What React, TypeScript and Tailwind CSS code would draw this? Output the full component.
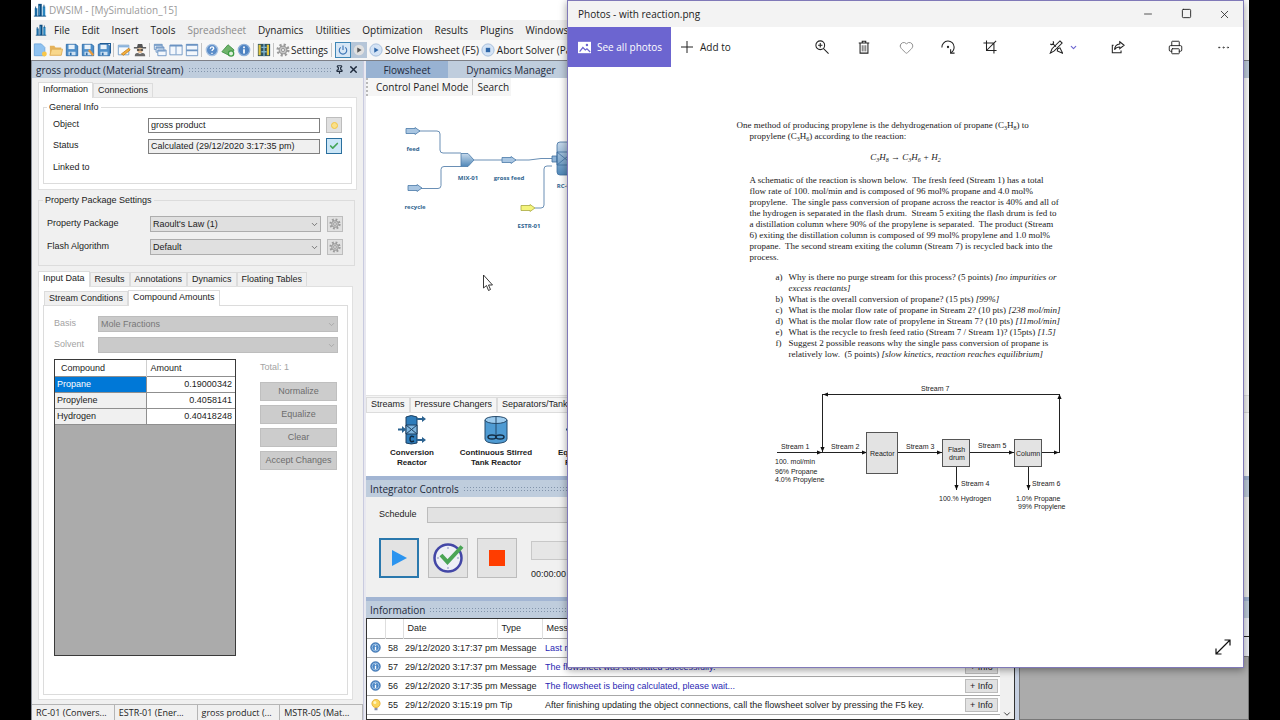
import { Fragment, useState } from 'react'
import type { ReactNode } from 'react'

import clsx from 'clsx'
import { Check, ChevronDown, Ellipsis, Heart, Minus, Pin, Printer, Square, X } from 'lucide-react'

const menuItems = [
  'File',
  'Edit',
  'Insert',
  'Tools',
  'Spreadsheet',
  'Dynamics',
  'Utilities',
  'Optimization',
  'Results',
  'Plugins',
  'Windows',
]

const compounds = [
  { name: 'Propane', amount: '0.19000342' },
  { name: 'Propylene', amount: '0.4058141' },
  { name: 'Hydrogen', amount: '0.40418248' },
]

const messages = [
  { id: 58, date: '29/12/2020 3:17:37 pm', type: 'Message', text: 'Last run took 0.4 s.' },
  { id: 57, date: '29/12/2020 3:17:37 pm', type: 'Message', text: 'The flowsheet was calculated successfully.' },
  { id: 56, date: '29/12/2020 3:17:35 pm', type: 'Message', text: 'The flowsheet is being calculated, please wait...' },
  {
    id: 55,
    date: '29/12/2020 3:15:19 pm',
    type: 'Tip',
    text: 'After finishing updating the object connections, call the flowsheet solver by pressing the F5 key.',
  },
]

const openEditors = ['RC-01 (Convers...', 'ESTR-01 (Ener...', 'gross product (...', 'MSTR-05 (Mat...']

/* ---------- icons ---------- */

function Icon({ children, size = 14 }: { children: ReactNode; size?: number }) {
  return (
    <svg width={size} height={size} viewBox="0 0 16 16" fill="none" aria-hidden="true">
      {children}
    </svg>
  )
}

function AppLogo({ size = 14 }: { size?: number }) {
  return (
    <Icon size={size}>
      <path d="M2 6h3v9H2z" fill="#1c6ca4" />
      <path d="M6 1h4v14H6z" fill="#0d4d80" />
      <path d="M11 4h3v11h-3z" fill="#2a86c0" />
      <path d="M3 4v3M12.500 2v3M7 4h2M1 15h14" stroke="#0d4d80" />
      <path d="M7.200 3v11" stroke="#4da3d8" />
    </Icon>
  )
}

function Floppy({ extra }: { extra?: ReactNode }) {
  return (
    <Icon>
      <path d="M1.500 1.500h11l2 2v11h-13z" fill="#4f8fc9" stroke="#2d6ca8" />
      <path d="M4 2h7v5H4z" fill="#e9f2fa" />
      <path d="M4 10h8v4H4z" fill="#cfe1f1" />
      <path d="M5.500 11h2v3h-2z" fill="#2d6ca8" />
      {extra}
    </Icon>
  )
}

function Gear({ size = 14 }: { size?: number }) {
  return (
    <Icon size={size}>
      <circle cx="8" cy="8" r="6" stroke="#9a9a9a" strokeWidth="3" strokeDasharray="2.400 2.310" />
      <circle cx="8" cy="8" r="4.500" fill="#c6c6c6" stroke="#8f8f8f" />
      <circle cx="8" cy="8" r="1.800" fill="#f0f0f0" stroke="#8f8f8f" />
    </Icon>
  )
}

function RoundBadge({ children }: { children: ReactNode }) {
  return (
    <Icon>
      <circle cx="8" cy="8" r="7" fill="#d4e3f5" stroke="#9fb9d8" />
      {children}
    </Icon>
  )
}

function InfoIcon() {
  return (
    <Icon size={11}>
      <circle cx="8" cy="8" r="7" fill="#4a86c5" stroke="#2f65a4" />
      <circle cx="8" cy="8" r="5" stroke="#b9d3ee" />
      <path d="M8 4v1.500M8 7v5" stroke="#fff" strokeWidth="2" />
    </Icon>
  )
}

function BulbIcon() {
  return (
    <Icon size={12}>
      <circle cx="8" cy="6" r="5.500" fill="#fbd55b" stroke="#e0a52e" />
      <circle cx="6.500" cy="4.500" r="2" fill="#fff4c0" />
      <path d="M6 12h4v3H6z" fill="#8b8fa8" />
    </Icon>
  )
}

const toolbarIcons: { label: string; icon: ReactNode }[][] = [
  [
    {
      label: 'New',
      icon: (
        <Icon>
          <path d="M1.500 1h8l4 4v9.500h-12z" fill="#8fc2f0" stroke="#6ba6dc" />
          <circle cx="13" cy="12.500" r="2.800" fill="#f9c74a" />
        </Icon>
      ),
    },
    {
      label: 'Open',
      icon: (
        <Icon>
          <path d="M1 3h5l1.500 2H14v9H1z" fill="#e5b35c" />
          <path d="M1 14l2-7h12.500L14 14z" fill="#f8d78b" stroke="#dfae57" />
        </Icon>
      ),
    },
    { label: 'Save', icon: <Floppy /> },
    { label: 'Save as', icon: <Floppy extra={<path d="M9 8l5 6" stroke="#ea9a3a" strokeWidth="2.500" />} /> },
    { label: 'Save all', icon: <Floppy extra={<path d="M3 .5h12.500V12" stroke="#1f5c96" strokeWidth="1.500" />} /> },
  ],
  [
    {
      label: 'Notes',
      icon: (
        <Icon>
          <path d="M1.500 2.500h12v11h-12z" fill="#f7fafd" stroke="#6e9ac6" />
          <path d="M2 3h11v2H2z" fill="#8ab4de" />
          <path d="M5 12.500l8.500-6.500 1.500 2-7.500 6z" fill="#f4b03e" stroke="#c7821e" />
        </Icon>
      ),
    },
    {
      label: 'Inspector',
      icon: (
        <Icon>
          <path d="M4.500 5l1-4h5l1 4z" fill="#555" />
          <path d="M1 5.500h14" stroke="#444" strokeWidth="1.500" />
          <circle cx="8" cy="8.500" r="3" fill="#e4bd93" />
          <path d="M2 15c0-4 3-4.500 6-2.500 3-2 6-1.500 6 2.500z" fill="#6a6a6a" />
          <path d="M4.500 8h3M8.500 8h3" stroke="#333" strokeWidth="1.500" />
        </Icon>
      ),
    },
  ],
  [
    {
      label: 'Cascade',
      icon: (
        <Icon>
          <path d="M1.500 1.500h9v6h-9z" fill="#e3ecf7" stroke="#6b93c2" />
          <path d="M3.500 4.500h9v6h-9z" fill="#e3ecf7" stroke="#6b93c2" />
          <path d="M5.500 8h9.500v6.500H5.500z" fill="#f3f7fc" stroke="#6b93c2" />
          <path d="M5.500 9h9M3.500 5.500h9M1.500 2.500h9" stroke="#6b93c2" strokeWidth="1.500" />
        </Icon>
      ),
    },
    {
      label: 'Tile vertically',
      icon: (
        <Icon>
          <path d="M1 2.500h14v11H1zM8 3v10" fill="#f3f7fc" stroke="#6b93c2" />
          <path d="M1 3h14" stroke="#6b93c2" strokeWidth="2" />
        </Icon>
      ),
    },
    {
      label: 'Tile horizontally',
      icon: (
        <Icon>
          <path d="M1.500 1.500h13v13h-13z" fill="#f3f7fc" stroke="#6b93c2" />
          <path d="M1.500 2h13M1.500 8.500h13" stroke="#6b93c2" strokeWidth="2" />
        </Icon>
      ),
    },
  ],
  [
    {
      label: 'Help',
      icon: (
        <Icon>
          <circle cx="8" cy="8" r="6.500" fill="#5b8dc9" stroke="#a9c3e2" strokeWidth="1.500" />
          <path d="M6 6.500c0-3 4-2.500 4-.5 0 1.500-2 1.500-2 3M8 11v1.500" stroke="#fff" strokeWidth="1.500" />
        </Icon>
      ),
    },
    {
      label: 'Donate',
      icon: (
        <Icon>
          <path d="M1 10L8 2l7 6-6 6z" fill="#6fb36b" stroke="#3f8f45" />
          <circle cx="11.500" cy="12" r="3" fill="#dff0dd" stroke="#3f9c45" strokeWidth="1.500" />
        </Icon>
      ),
    },
    {
      label: 'About',
      icon: (
        <Icon>
          <circle cx="8" cy="8" r="6.500" fill="#4d82c2" stroke="#8fb0d8" strokeWidth="1.500" />
          <path d="M8 4v2M8 7v5" stroke="#fff" strokeWidth="2" />
        </Icon>
      ),
    },
  ],
  [
    {
      label: 'CAPE-OPEN',
      icon: (
        <Icon>
          <path d="M1 1h14v14H1z" fill="#2f5360" />
          <path d="M3 2v12M12.500 2v12" stroke="#e3c53f" strokeWidth="2.500" />
          <path d="M8 1v14M5 5h6M5 10h6" stroke="#7fb4cf" strokeWidth="1.500" />
        </Icon>
      ),
    },
  ],
]

/* ---------- small shared pieces ---------- */

function Grip() {
  return (
    <span className="h-[5px] flex-1 bg-[radial-gradient(circle,#8294ab_0.6px,transparent_1px)] bg-[size:3px_3px]" />
  )
}

function PanelHeader({ title, children }: { title: string; children?: ReactNode }) {
  return (
    <div className="flex h-[17px] shrink-0 items-center gap-1 bg-[#bfcddd] px-1 font-['Open_Sans',sans-serif] text-[10px] leading-4 text-[#1e2a3c]">
      <h2 className="whitespace-nowrap">{title}</h2>
      <Grip />
      {children}
    </div>
  )
}

function Tab({ active, children }: { active?: boolean; children: ReactNode }) {
  return (
    <button
      type="button"
      role="tab"
      aria-selected={!!active}
      className={clsx(
        'border border-b-0 border-[#dcdcdc] px-1 text-[9px] whitespace-nowrap',
        active ? 'relative -mb-px h-4 bg-white pb-0.5' : 'h-3.5 bg-[#f0f0f0]',
      )}
    >
      {children}
    </button>
  )
}

function SelectBox({ id, value, disabled }: { id: string; value: string; disabled?: boolean }) {
  return (
    <div className="relative">
      <select
        id={id}
        disabled={disabled}
        defaultValue={value}
        className={clsx(
          'block h-4 w-full appearance-none border px-[2px] text-[9px] leading-3 disabled:opacity-100',
          disabled ? 'border-[#bdbdbd] bg-[#cacaca] text-[#777]' : 'border-[#adadad] bg-[#e0e0e0] text-[#1c1c1c]',
        )}
      >
        <option>{value}</option>
      </select>
      <ChevronDown
        size={9}
        strokeWidth={2}
        className={clsx(
          'pointer-events-none absolute top-1 right-[2px]',
          disabled ? 'text-[#a0a0a0]' : 'text-[#555]',
        )}
      />
    </div>
  )
}

function IconButton({ label, on, children }: { label: string; on?: boolean; children: ReactNode }) {
  return (
    <button
      type="button"
      aria-label={label}
      className={clsx(
        'ml-1.5 flex size-4 shrink-0 items-center justify-center border',
        on ? 'border-[#2a6f9e] bg-[#cbe6f7]' : 'border-[#bdbdbd] bg-[#e0e0e0]',
      )}
    >
      {children}
    </button>
  )
}

/* ---------- stream editor ---------- */

function StreamEditor() {
  const [selected, setSelected] = useState('Propane')

  return (
    <section className="flex w-[332px] shrink-0 flex-col border-l border-[#8a8f98] bg-[#f0f0f0]">
      <PanelHeader title="gross product (Material Stream)">
        <button type="button" aria-label="Auto hide">
          <Pin size={9} strokeWidth={3} />
        </button>
        <button type="button" aria-label="Close">
          <X size={11} strokeWidth={3} />
        </button>
      </PanelHeader>

      <div className="flex flex-1 flex-col px-1.5 pt-1">
        <div role="tablist" className="flex items-end">
          <Tab active>Information</Tab>
          <Tab>Connections</Tab>
        </div>
        <div className="border border-[#e0e0e0] bg-white px-1 pt-[3px] pb-[5px]">
          <fieldset className="border border-[#dcdcdc] pt-1 pb-2 pl-[9px]">
            <legend className="-ml-1.5 px-[2px] text-[9px] leading-3">General Info</legend>
            <div className="grid grid-cols-[95px_172px_22px] items-center gap-y-[5px] text-[9px]">
              <label htmlFor="object">Object</label>
              <input
                id="object"
                defaultValue="gross product"
                className="h-[15px] w-full border border-[#7f7f7f] bg-white px-[2px]"
              />
              <IconButton label="Active">
                <span className="size-[7px] rounded-full border border-[#f3c443] bg-[#fae08a]" />
              </IconButton>
              <label htmlFor="status">Status</label>
              <input
                id="status"
                readOnly
                value="Calculated (29/12/2020 3:17:35 pm)"
                className="h-[15px] w-full border border-[#7f7f7f] bg-[#f0f0f0] px-[2px]"
              />
              <IconButton label="Calculated" on>
                <Check size={10} strokeWidth={4} className="text-[#45a557]" />
              </IconButton>
              <span className="h-4 leading-4">Linked to</span>
            </div>
          </fieldset>
        </div>

        <fieldset className="mt-1 mr-[2px] border border-[#dcdcdc] pb-2.5 pl-2">
          <legend className="-ml-1 px-[2px] text-[9px] leading-3">Property Package Settings</legend>
          <div className="grid grid-cols-[103px_171px_22px] items-center gap-y-[7px] pt-2.5 text-[9px]">
            <label htmlFor="package">Property Package</label>
            <SelectBox id="package" value="Raoult's Law (1)" />
            <IconButton label="Configure property package">
              <Gear size={12} />
            </IconButton>
            <label htmlFor="flash">Flash Algorithm</label>
            <SelectBox id="flash" value="Default" />
            <IconButton label="Configure flash algorithm">
              <Gear size={12} />
            </IconButton>
          </div>
        </fieldset>

        <div role="tablist" className="mt-[5px] flex items-end">
          <Tab active>Input Data</Tab>
          <Tab>Results</Tab>
          <Tab>Annotations</Tab>
          <Tab>Dynamics</Tab>
          <Tab>Floating Tables</Tab>
        </div>
        <div className="mr-1 mb-1 flex flex-1 flex-col border border-[#e0e0e0] bg-white px-1 pt-[3px] pb-1">
          <div role="tablist" className="flex items-end pl-px">
            <Tab>Stream Conditions</Tab>
            <Tab active>Compound Amounts</Tab>
          </div>
          <div className="flex flex-1 flex-col border border-[#dcdcdc] px-2.5 pt-2.5">
            <div className="grid grid-cols-[44px_240px] items-center gap-y-[5px] text-[9px] text-[#a3a3a3]">
              <label htmlFor="basis">Basis</label>
              <SelectBox id="basis" value="Mole Fractions" disabled />
              <label htmlFor="solvent">Solvent</label>
              <SelectBox id="solvent" value="" disabled />
            </div>
            <div className="mt-1.5 mb-[38px] flex flex-1 gap-6">
              <div className="w-[184px] border border-[#3a3a3a] bg-[#ababab]">
                <table className="w-full border-collapse text-[9px] leading-3">
                  <thead className="bg-white">
                    <tr className="h-4 border-b border-[#8f8f8f]">
                      <th className="w-[91px] border-r border-[#cfcfcf] pl-1.5 text-left font-normal">Compound</th>
                      <th className="pl-1 text-left font-normal">Amount</th>
                    </tr>
                  </thead>
                  <tbody>
                    {compounds.map((compound) => (
                      <tr
                        key={compound.name}
                        onClick={() => setSelected(compound.name)}
                        className="h-4 border-b border-[#8f8f8f]"
                      >
                        <td
                          className={clsx(
                            'border-r border-[#8f8f8f] pl-[2px]',
                            selected === compound.name ? 'bg-[#0078d7] text-white' : 'bg-[#f0f0f0]',
                          )}
                        >
                          {compound.name}
                        </td>
                        <td className="bg-white pr-[3px] text-right">{compound.amount}</td>
                      </tr>
                    ))}
                  </tbody>
                </table>
              </div>
              <div className="flex w-[78px] flex-col gap-1 text-[9px]">
                <p className="mb-[3px] h-4 leading-4 text-[#a3a3a3]">Total: 1</p>
                {['Normalize', 'Equalize', 'Clear', 'Accept Changes'].map((label) => (
                  <button
                    key={label}
                    type="button"
                    disabled
                    className="h-[19px] border border-[#bfbfbf] bg-[#cccccc] whitespace-nowrap text-[#6d6d6d]"
                  >
                    {label}
                  </button>
                ))}
              </div>
            </div>
          </div>
        </div>
      </div>

      <div
        role="tablist"
        className="grid h-4 shrink-0 grid-cols-4 border-t border-[#b5b5b5] font-['Open_Sans',sans-serif] text-[9px] leading-3"
      >
        {openEditors.map((name) => (
          <button key={name} type="button" role="tab" className="border-r border-[#b5b5b5] px-1 text-left whitespace-nowrap">
            {name}
          </button>
        ))}
      </div>
    </section>
  )
}

/* ---------- flowsheet ---------- */

function StreamArrow({ x, y, energy }: { x: number; y: number; energy?: boolean }) {
  return (
    <path
      transform={`translate(${x} ${y})`}
      d="M0 -2.500h9v-1l5 3.500-5 3.500v-1H0z"
      fill={energy ? '#f4f47c' : '#a9c6e2'}
      stroke={energy ? '#a9a941' : '#4a7aa8'}
      strokeWidth="0.8"
    />
  )
}

function FlowsheetCanvas() {
  return (
    <svg width="212" height="297" viewBox="366 96 212 297" className="block" role="img" aria-label="Flowsheet">
      <defs>
        <linearGradient id="unit" x1="0" y1="0" x2="0" y2="1">
          <stop offset="0" stopColor="#c7daec" />
          <stop offset="1" stopColor="#4f87b8" />
        </linearGradient>
      </defs>
      <g fill="none" stroke="#6a8fb5" strokeWidth="1">
        <path d="M419 131h18q3 0 3 3v16q0 3 3 3h18" />
        <path d="M421 188.500h17q3 0 3-3v-16q0-3 3-3h17" />
        <path d="M474 160h29M515 160h14l12-1.500h12M535 208h6q3 0 3-3v-36q0-3 3-3h5" />
      </g>
      <path d="M461 153.500h7l6 6.500-6 6.500h-7z" fill="url(#unit)" stroke="#4a7aa8" strokeWidth="0.800" />
      <StreamArrow x={406} y={131} />
      <StreamArrow x={408} y={188} />
      <StreamArrow x={502} y={160} />
      <StreamArrow x={521} y={208} energy />
      <path d="M552 156h5v6h-5z" fill="#8fb3d6" stroke="#3f6f9f" strokeWidth="0.800" />
      <rect x="557" y="142" width="16" height="33" rx="3" fill="url(#unit)" stroke="#3f6f9f" strokeWidth="0.800" />
      <path d="M557 152h16v13h-16zM557 152l16 13M573 152l-16 13" fill="none" stroke="#3f6f9f" strokeWidth="0.800" />
      <g className="fill-[#2f648f] font-['Open_Sans',sans-serif] text-[6px] font-bold" textAnchor="middle">
        <text x="413" y="151">feed</text>
        <text x="415" y="209">recycle</text>
        <text x="468" y="180">MIX-01</text>
        <text x="509" y="180">gross feed</text>
        <text x="529" y="228">ESTR-01</text>
        <text x="565" y="188">RC-01</text>
      </g>
      <path d="M483.500 275v13l3-2.500 2 5 2-1-2-4.500h4z" fill="#fff" stroke="#222" strokeWidth="0.900" />
    </svg>
  )
}

function ConversionReactorIcon() {
  return (
    <svg width="30" height="30" viewBox="0 0 30 30" fill="none" aria-hidden="true">
      <path d="M9 2q5-3 11 0v26q-6 2-11 0z" fill="#2f7dbb" stroke="#1c3f60" />
      <path d="M9 10h11v9H9zM9 10l11 9M20 10L9 19" fill="#7fb5de" stroke="#1c3f60" />
      <path d="M1 14.500h7M20 4h7M20 25h7" stroke="#2b6290" strokeWidth="2" />
      <path d="M5 11l4 3.500L5 18zM25 1l4 3-4 3zM25 22l4 3-4 3z" fill="#2b6290" />
      <path d="M17 22q-4-2-4 2t4 2" stroke="#102a42" strokeWidth="1.500" />
    </svg>
  )
}

function StirredTankIcon() {
  return (
    <svg width="26" height="30" viewBox="0 0 26 30" fill="none" aria-hidden="true">
      <path d="M2 5v19q0 4 11 4.500Q24 28 24 24V5" fill="#4f9bd3" stroke="#23496b" />
      <ellipse cx="13" cy="5" rx="11" ry="3.500" fill="#9ccbee" stroke="#23496b" />
      <path d="M13 2v20" stroke="#23496b" />
      <ellipse cx="9" cy="22" rx="4" ry="2" stroke="#152f47" strokeWidth="1.500" />
      <ellipse cx="17" cy="22" rx="4" ry="2" stroke="#152f47" strokeWidth="1.500" />
    </svg>
  )
}

const paletteItems = [
  { lines: ['Conversion', 'Reactor'], icon: <ConversionReactorIcon /> },
  { lines: ['Continuous Stirred', 'Tank Reactor'], icon: <StirredTankIcon /> },
  { lines: ['Equilibrium', 'Reactor'], icon: <ConversionReactorIcon /> },
]

function FlowsheetPanel() {
  return (
    <section className="flex min-h-0 flex-1 flex-col bg-white">
      <div
        role="tablist"
        className="flex h-[17px] shrink-0 bg-[#bfcddd] font-['Open_Sans',sans-serif] text-[10px] leading-3 text-[#1e2a3c]"
      >
        <button type="button" role="tab" aria-selected="true" className="w-[82px] bg-[#98b2d2]">
          Flowsheet
        </button>
        <button type="button" role="tab" aria-selected="false" className="w-[126px]">
          Dynamics Manager
        </button>
      </div>
      <div className="flex h-[18px] w-[145px] shrink-0 items-center border-l-2 border-dotted border-[#b8b8b8] bg-[#f5f5f5] pl-2 font-['Open_Sans',sans-serif] text-[10px] leading-4 whitespace-nowrap">
        <button type="button">Control Panel Mode</button>
        <button type="button" className="ml-1 border-l border-[#c4c4c4] pl-1">
          Search
        </button>
      </div>
      <div className="min-h-0 flex-1 overflow-hidden">
        <FlowsheetCanvas />
      </div>
      <div role="tablist" className="flex h-[17px] shrink-0 items-end border-t border-[#e3e3e3] bg-[#f5f5f5] text-[9px]">
        {['Streams', 'Pressure Changers', 'Separators/Tanks', 'Mixers/Splitters'].map((name) => (
          <button
            key={name}
            type="button"
            role="tab"
            className="h-[15px] border border-b-0 border-[#dcdcdc] px-1 whitespace-nowrap"
          >
            {name}
          </button>
        ))}
      </div>
      <div className="flex h-16 shrink-0 border-t border-[#dcdcdc] pt-[2px] pl-1 text-center text-[8px] leading-[10px] font-bold">
        {paletteItems.map((item) => (
          <div key={item.lines[0]} className="flex w-[84px] flex-col items-center whitespace-nowrap">
            <div className="mb-[3px]">{item.icon}</div>
            {item.lines.map((line) => (
              <span key={line}>{line}</span>
            ))}
          </div>
        ))}
      </div>
    </section>
  )
}

/* ---------- docked panels ---------- */

function IntegratorControls() {
  return (
    <section className="flex shrink-0 flex-col border-t-4 border-[#a2b5d3] bg-[#f0f0f0]">
      <PanelHeader title="Integrator Controls">
        <X size={11} strokeWidth={3} />
      </PanelHeader>
      <div className="h-[100px] px-[13px] pt-2.5">
        <div className="flex items-center">
          <label htmlFor="schedule" className="w-12 text-[9px]">
            Schedule
          </label>
          <select id="schedule" className="h-4 w-64 appearance-none border border-[#bcbcbc] bg-[#e2e2e2]" />
        </div>
        <div className="mt-[15px] flex gap-[9px]">
          <button
            type="button"
            aria-label="Run"
            className="flex size-10 items-center justify-center border-2 border-[#2a78ad] bg-[#e3e3e3]"
          >
            <svg width="16" height="16" viewBox="0 0 16 16" aria-hidden="true">
              <path d="M1 0l15 8L1 16z" fill="#2b94ef" />
            </svg>
          </button>
          <button
            type="button"
            aria-label="Real-time"
            className="flex size-10 items-center justify-center border border-[#bcbcbc] bg-[#e3e3e3]"
          >
            <svg width="32" height="32" viewBox="0 0 32 32" fill="none" aria-hidden="true">
              <circle cx="16" cy="16" r="13.500" fill="#eef0f6" stroke="#4347a6" strokeWidth="2.500" />
              <path d="M16 5v2M16 25v2M5 16h2M25 16h2" stroke="#8a8fc0" />
              <path d="M9 13l6.500 7L30 4.500" stroke="#4aa556" strokeWidth="4" />
            </svg>
          </button>
          <button
            type="button"
            aria-label="Stop"
            className="flex size-10 items-center justify-center border border-[#bcbcbc] bg-[#e3e3e3]"
          >
            <span className="size-4 bg-[#ff3d00]" />
          </button>
          <div className="ml-[5px] pt-[3px]">
            <div className="h-[19px] w-40 border border-[#c8c8c8] bg-[#e6e6e6]" />
            <p className="mt-2 text-[9px]">00:00:00</p>
          </div>
        </div>
      </div>
    </section>
  )
}

function InformationPanel() {
  return (
    <section className="flex w-[649px] shrink-0 flex-col">
      <PanelHeader title="Information">
        <X size={11} strokeWidth={3} />
      </PanelHeader>
      <div className="flex min-h-0 flex-1 items-start overflow-hidden border border-[#333] bg-white">
        <table className="w-full table-fixed border-collapse text-[9px] leading-3">
          <thead>
            <tr className="h-[19px] border-b border-[#a8a8a8] text-left">
              <th className="w-[18px] border-r border-[#dedede]" />
              <th className="w-[18px] border-r border-[#dedede]" />
              <th className="w-[94px] border-r border-[#dedede] pl-1 font-normal">Date</th>
              <th className="w-[45px] border-r border-[#dedede] pl-1 font-normal">Type</th>
              <th className="pl-1 font-normal">Message</th>
              <th className="w-[37px]" />
            </tr>
          </thead>
          <tbody>
            {messages.map((m) => (
              <tr key={m.id} className="h-[19px] border-b border-[#a8a8a8] whitespace-nowrap">
                <td className="pl-[3px]">{m.type === 'Tip' ? <BulbIcon /> : <InfoIcon />}</td>
                <td className="pl-[3px]">{m.id}</td>
                <td className="pl-[2px]">{m.date}</td>
                <td className="pl-[3px]">{m.type}</td>
                <td className={clsx('pl-[3px]', m.type === 'Message' && 'text-[#2a1fb4]')}>{m.text}</td>
                <td className="px-[2px]">
                  <button type="button" className="block h-3.5 w-full border border-[#bcbcbc] bg-[#e2e2e2]">
                    + Info
                  </button>
                </td>
              </tr>
            ))}
          </tbody>
        </table>
        <div className="flex w-3.5 shrink-0 flex-col items-center justify-end self-stretch bg-[#f0f0f0]">
          <ChevronDown size={10} strokeWidth={2} />
        </div>
      </div>
    </section>
  )
}

function WatchPanel() {
  return (
    <section className="ml-1 flex flex-1 flex-col">
      <PanelHeader title="Watch">
        <Pin size={9} strokeWidth={3} />
      </PanelHeader>
      <div className="h-[19px] border-b border-[#222] bg-[#eef0f8]" />
      <div className="h-[19px] bg-[#eef0f8]" />
      <div className="flex-1 border border-[#777] bg-[#ababab]" />
    </section>
  )
}

/* ---------- photos window ---------- */

function ZoomIcon() {
  return (
    <Icon>
      <circle cx="6" cy="6" r="5" stroke="currentColor" strokeWidth="1.200" />
      <path d="M9.500 9.500L15.500 15.500M3.500 6h5M6 3.500v5" stroke="currentColor" strokeWidth="1.200" />
    </Icon>
  )
}

function BinIcon() {
  return (
    <Icon>
      <path d="M2 3.500h12M6 3V1.500h4V3M3.500 4v11h9V4" stroke="currentColor" strokeWidth="1.200" />
      <path d="M6 6v7M8 6v7M10 6v7" stroke="currentColor" strokeWidth="0.800" />
    </Icon>
  )
}

function RotateIcon() {
  return (
    <Icon>
      <path d="M1 8.500a7 7 0 0 1 14-.5c0 3-1.500 5.500-4 6.500" stroke="currentColor" strokeWidth="1.200" />
      <path d="M11 10.500v4.500h4.500" stroke="currentColor" strokeWidth="1.200" />
      <circle cx="8" cy="8" r="1.300" fill="currentColor" />
    </Icon>
  )
}

function CropIcon() {
  return (
    <Icon>
      <path d="M4 .5V12h11.500M.5 3.500H12.500V15.500M4 12L15 1" stroke="currentColor" strokeWidth="1.200" />
    </Icon>
  )
}

function EditCreateIcon() {
  return (
    <Icon>
      <path d="M12.500 1l2.500 2.500L6 12.500 1.500 15 3.500 10z" stroke="currentColor" strokeWidth="1.200" />
      <path d="M4.500 1.500a2 2 0 1 1-3 3M4.500 4.500l3.500 3M10 10l2.500-1 3 6-6-2.500z" stroke="currentColor" strokeWidth="1.200" />
    </Icon>
  )
}

function ShareIcon() {
  return (
    <Icon>
      <path d="M3 6H1.500v8.500h10V12" stroke="currentColor" strokeWidth="1.200" />
      <path d="M10 2l5 4-5 4V8q-4 0-6 3 .5-6 6-6.500z" stroke="currentColor" strokeWidth="1.200" />
    </Icon>
  )
}

function PhotosBarButton({ label, className, children }: { label: string; className: string; children: ReactNode }) {
  return (
    <button type="button" aria-label={label} className={clsx('flex h-full items-center justify-center', className)}>
      {children}
    </button>
  )
}

const paragraph = [
  'A schematic of the reaction is shown below.  The fresh feed (Stream 1) has a total',
  'flow rate of 100. mol/min and is composed of 96 mol% propane and 4.0 mol%',
  'propylene.  The single pass conversion of propane across the reactor is 40% and all of',
  'the hydrogen is separated in the flash drum.  Stream 5 exiting the flash drum is fed to',
  'a distillation column where 90% of the propylene is separated.  The product (Stream',
  '6) exiting the distillation column is composed of 99 mol% propylene and 1.0 mol%',
  'propane.  The second stream exiting the column (Stream 7) is recycled back into the',
  'process.',
]

// each line is a question part followed by its answer part
const questions = [
  {
    key: 'a',
    lines: [
      ['Why is there no purge stream for this process? (5 points) ', '[no impurities or'],
      ['', 'excess reactants]'],
    ],
  },
  { key: 'b', lines: [['What is the overall conversion of propane? (15 pts) ', '[99%]']] },
  { key: 'c', lines: [['What is the molar flow rate of propane in Stream 2? (10 pts) ', '[238 mol/min]']] },
  { key: 'd', lines: [['What is the molar flow rate of propylene in Stream 7? (10 pts) ', '[11mol/min]']] },
  { key: 'e', lines: [['What is the recycle to fresh feed ratio (Stream 7 / Stream 1)? (15pts) ', '[1.5]']] },
  {
    key: 'f',
    lines: [
      ['Suggest 2 possible reasons why the single pass conversion of propane is', ''],
      ['relatively low.  (5 points) ', '[slow kinetics, reaction reaches equilibrium]'],
    ],
  },
]

function Formula({ c, h }: { c?: number; h: number }) {
  return (
    <>
      {c && (
        <>
          C<sub className="text-[6px]">{c}</sub>
        </>
      )}
      H<sub className="text-[6px]">{h}</sub>
    </>
  )
}

const streamPaths = [
  'M777 452.500H822',
  'M822 452.500H867',
  'M898 452.500H942',
  'M970 452.500H1014',
  'M1042 452.500H1059',
  'M1059.500 453V394',
  'M1059 394.500H823',
  'M822.500 394V452',
  'M956.500 467V490',
  'M1028.500 467V490',
]

function ProcessSchematic() {
  return (
    <svg width="300" height="135" viewBox="770 380 300 135" className="block" role="img" aria-label="Process schematic">
      <defs>
        <marker id="arrow" viewBox="0 0 6 6" refX="6" refY="3" markerWidth="5" markerHeight="5" orient="auto">
          <path d="M0 0.500L6 3 0 5.500z" fill="#111" />
        </marker>
      </defs>
      {streamPaths.map((d) => (
        <path key={d} d={d} fill="none" stroke="#222" strokeWidth="1" markerEnd="url(#arrow)" />
      ))}
      <g fill="#e3e3e3" stroke="#555" strokeWidth="1">
        <rect x="866.500" y="432.500" width="31" height="41" />
        <rect x="942.500" y="439.500" width="27" height="27" />
        <rect x="1014.500" y="439.500" width="27" height="27" />
      </g>
      <g className="fill-[#222] font-['Liberation_Sans',Arial,sans-serif] text-[7px]">
        <text x="921" y="391">Stream 7</text>
        <text x="781" y="449">Stream 1</text>
        <text x="831" y="449">Stream 2</text>
        <text x="906" y="449">Stream 3</text>
        <text x="978" y="448">Stream 5</text>
        <text x="961" y="486">Stream 4</text>
        <text x="1032" y="486">Stream 6</text>
        <text x="870" y="456">Reactor</text>
        <text x="948" y="452">Flash</text>
        <text x="949" y="460">drum</text>
        <text x="1016" y="456">Column</text>
        <text x="775" y="464">100. mol/min</text>
        <text x="775" y="474">96% Propane</text>
        <text x="775" y="482">4.0% Propylene</text>
        <text x="939" y="501">100.% Hydrogen</text>
        <text x="1016" y="501">1.0% Propane</text>
        <text x="1018" y="509">99% Propylene</text>
      </g>
    </svg>
  )
}

function ProblemSheet() {
  return (
    <article className="mx-auto w-[338px] pt-[53px] font-['Liberation_Serif','Times_New_Roman',serif] text-[9px] leading-[11px] whitespace-pre text-[#1a1a1a]">
      <p className="pl-[13px] -indent-[13px]">
        One method of producing propylene is the dehydrogenation of propane (<Formula c={3} h={8} />) to{'\n'}
        propylene (<Formula c={3} h={6} />) according to the reaction:
      </p>
      <p className="mt-2.5 text-center italic">
        <Formula c={3} h={8} /> → <Formula c={3} h={6} /> + <Formula h={2} />
      </p>
      <p className="mt-3 pl-[13px]">{paragraph.join('\n')}</p>
      <ol className="mt-[9px] pl-[39px]">
        {questions.map((q) => (
          <li key={q.key} className="flex">
            <span className="w-[13px]">{q.key})</span>
            <div>
              {q.lines.map(([text, answer]) => (
                <p key={text + answer}>
                  {text}
                  {answer && <em>{answer}</em>}
                </p>
              ))}
            </div>
          </li>
        ))}
      </ol>
      <div className="mt-5 ml-[33px]">
        <ProcessSchematic />
      </div>
    </article>
  )
}

function PhotosWindow() {
  return (
    <section className="absolute top-0 right-[5px] bottom-[52px] left-[536px] flex flex-col border border-[#8079b8] bg-white font-['Open_Sans',sans-serif] text-[10px] text-[#222] shadow-[0_2px_8px_rgba(0,0,0,0.4)]">
      <header className="flex h-[26px] shrink-0 items-center bg-[#f3f3f3] pl-2.5">
        <h1>Photos - with reaction.png</h1>
        <div className="ml-auto flex">
          <button type="button" aria-label="Minimize" className="flex w-[38px] justify-center">
            <Minus size={12} strokeWidth={1.5} />
          </button>
          <button type="button" aria-label="Maximize" className="flex w-[38px] justify-center">
            <Square size={11} strokeWidth={2} strokeLinejoin="miter" />
          </button>
          <button type="button" aria-label="Close" className="flex w-[38px] justify-center">
            <X size={13} strokeWidth={1.5} />
          </button>
        </div>
      </header>
      <div className="flex h-10 shrink-0 items-center">
        <a href="#photos" className="flex h-full w-[103px] items-center gap-[6px] bg-[#6c65d0] pl-2.5 text-white">
          <Icon size={13}>
            <path d="M0 1h16v14H0z" fill="#fff" />
            <path d="M2 13l4-5 3 3 2-1.500 4 4" stroke="#6c65d0" strokeWidth="1.500" />
            <circle cx="11" cy="5" r="1.500" fill="#6c65d0" />
          </Icon>
          See all photos
        </a>
        <button type="button" className="ml-[9px] flex items-center gap-1.5">
          <svg width="14" height="14" viewBox="0 0 14 14" stroke="currentColor" aria-hidden="true">
            <path d="M7 1v12M1 7h12" />
          </svg>
          Add to
        </button>
        <div className="ml-auto flex h-full">
          <PhotosBarButton label="Zoom" className="w-[42px]">
            <ZoomIcon />
          </PhotosBarButton>
          <PhotosBarButton label="Delete" className="w-[42px]">
            <BinIcon />
          </PhotosBarButton>
          <PhotosBarButton label="Favorite" className="w-[42px] text-[#8a8a8a]">
            <Heart size={15} strokeWidth={1.5} />
          </PhotosBarButton>
          <PhotosBarButton label="Rotate" className="w-[42px]">
            <RotateIcon />
          </PhotosBarButton>
          <PhotosBarButton label="Crop" className="w-[42px]">
            <CropIcon />
          </PhotosBarButton>
          <PhotosBarButton label="Edit and create" className="mr-[5px] ml-[31px] w-[42px] gap-1.5">
            <EditCreateIcon />
            <ChevronDown size={9} strokeWidth={3} className="text-[#6c65d0]" />
          </PhotosBarButton>
          <PhotosBarButton label="Share" className="w-[58px]">
            <ShareIcon />
          </PhotosBarButton>
          <PhotosBarButton label="Print" className="w-14">
            <Printer size={15} strokeWidth={1.5} />
          </PhotosBarButton>
          <PhotosBarButton label="More" className="w-10">
            <Ellipsis size={15} strokeWidth={1} />
          </PhotosBarButton>
        </div>
      </div>
      <div className="min-h-0 flex-1 overflow-hidden">
        <ProblemSheet />
      </div>
      <button type="button" aria-label="Full screen" className="absolute right-3 bottom-3">
        <svg width="16" height="16" viewBox="0 0 16 16" fill="none" stroke="#111" strokeWidth="1.200" aria-hidden="true">
          <path d="M1 15L15 1M9.500 1H15v5.500M1 9.500V15h5.500" />
        </svg>
      </button>
    </section>
  )
}

/* ---------- page ---------- */

export default function App() {
  return (
    <div className="h-screen overflow-hidden bg-black px-[31px] font-['Liberation_Sans',Arial,sans-serif] text-[#1c1c1c]">
      <div className="relative flex h-full flex-col overflow-hidden bg-[#f0f0f0]">
        <header className="shrink-0 font-['Open_Sans',sans-serif] text-[10px] whitespace-nowrap">
          <div className="flex h-5 items-center gap-[2px] bg-white pl-[2px] text-[#9a9a9a]">
            <AppLogo />
            DWSIM - [MySimulation_15]
          </div>
          <nav className="flex h-5 items-center gap-[7px] pl-1 text-[#222]">
            <AppLogo size={12} />
            <div className="flex gap-3">
              {menuItems.map((item) => (
                <button key={item} type="button" className={clsx(item === 'Spreadsheet' && 'text-[#8a8a8a]')}>
                  {item}
                </button>
              ))}
            </div>
          </nav>
          <div role="toolbar" className="flex h-5 items-center bg-[#f7f7f7] pl-px">
            {toolbarIcons.map((group) => (
              <Fragment key={group[0].label}>
                {group.map(({ label, icon }) => (
                  <button key={label} type="button" aria-label={label} className="flex w-4 justify-center">
                    {icon}
                  </button>
                ))}
                <span className="mr-[2px] ml-px h-3.5 w-px bg-[#c4c4c4]" />
              </Fragment>
            ))}
            <button type="button" className="flex items-center gap-px">
              <Gear />
              Settings
            </button>
            <span className="mx-[3px] h-3.5 w-px bg-[#c4c4c4]" />
            <button type="button" aria-label="Solver" className="flex size-4 items-center justify-center border border-[#3f86b5] bg-[#d6e6f5]">
              <Icon size={12}>
                <path d="M5 4.500a5 5 0 1 0 6 0M8 2v6" stroke="#3b74b5" strokeWidth="1.500" />
              </Icon>
            </button>
            <button type="button" aria-label="Auto solve" className="flex size-4 items-center justify-center bg-[#b6c6d8]">
              <Icon>
                <circle cx="8" cy="8" r="6" fill="#e0e0e0" />
                <path d="M6 5l5 3-5 3z" fill="#555" />
              </Icon>
            </button>
            <button type="button" className="ml-[2px] flex items-center gap-[2px]">
              <RoundBadge>
                <path d="M6 5l5 3-5 3z" fill="#2f67a8" />
              </RoundBadge>
              Solve Flowsheet (F5)
            </button>
            <button type="button" className="ml-[2px] flex items-center gap-[2px]">
              <RoundBadge>
                <path d="M5.500 5.500h5v5h-5z" fill="#2f67a8" />
              </RoundBadge>
              Abort Solver (Pause)
            </button>
          </div>
        </header>

        <main className="flex min-h-0 flex-1 border-t border-[#7d7f86]">
          <StreamEditor />
          <div className="w-[3px] shrink-0 border-l border-[#c9cbdf] bg-[#e8e8f0]" />
          <div className="flex min-w-0 flex-1 flex-col">
            <FlowsheetPanel />
            <IntegratorControls />
            <div className="flex h-[123px] shrink-0 border-t-4 border-[#a2b5d3] bg-[#c5cfe0]">
              <InformationPanel />
              <WatchPanel />
            </div>
          </div>
        </main>

        <PhotosWindow />
      </div>
    </div>
  )
}
